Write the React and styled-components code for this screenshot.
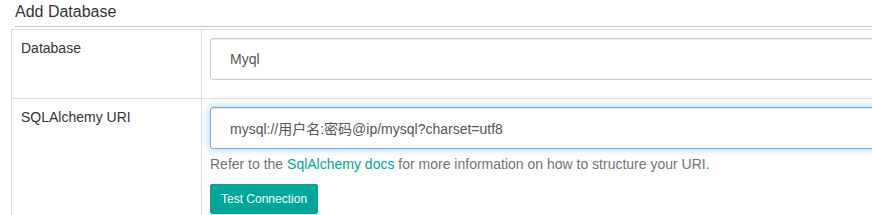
import React from "react";
import styled, { createGlobalStyle } from "styled-components";

const Global = createGlobalStyle`
  html, body { margin: 0; padding: 0; background: #fff; overflow: hidden; }
  body {
    font-family: "Liberation Sans", Arial, "Noto Sans CJK SC", sans-serif;
    font-size: 14px;
    line-height: 20px;
    color: #333;
  }
`;

const Page = styled.div`
  padding-left: 11px;
  width: 1000px;
`;

const Header = styled.div`
  margin-left: 4px;
  padding: 2px 0 4px 0;
  font-size: 16px;
  line-height: 20px;
  color: #333;
  border-bottom: 1px solid #c4c4c4;
`;

const Table = styled.table`
  margin-top: 2px;
  width: 100%;
  border-collapse: collapse;
  border: 1px solid #ddd;
`;

const Row = styled.tr`
  border-top: 1px solid #ddd;
`;

const LabelCell = styled.td`
  width: 172px;
  padding: 8px 8px 8px 9px;
  vertical-align: top;
  border-right: 1px solid #ddd;
  color: #333;
  line-height: 20px;
`;

const FieldCell = styled.td`
  padding: 8px;
  vertical-align: top;
`;

const Input = styled.input`
  display: block;
  box-sizing: border-box;
  width: 100%;
  height: 42px;
  margin: 0 0 ${(p) => (p.$last ? 0 : 10)}px 0;
  padding: 0 19px;
  font-family: "Liberation Sans", Arial, "Noto Sans CJK SC", sans-serif;
  font-size: 14px;
  color: #555;
  background: #fff;
  border: 1px solid ${(p) => (p.$focused ? "#66afe9" : "#ccc")};
  border-radius: 3px;
  outline: none;
  box-shadow: ${(p) =>
    p.$focused
      ? "inset 0 1px 1px rgba(0,0,0,.075), 0 0 8px rgba(102,175,233,.6)"
      : "inset 0 1px 1px rgba(0,0,0,.075)"};
`;

const Help = styled.p`
  margin: 5px 0 10px 0;
  color: #737373;
  font-size: 14px;
  line-height: 20px;
`;

const Link = styled.a`
  color: #00a699;
  text-decoration: none;
`;

const Button = styled.button`
  display: inline-block;
  height: 30px;
  padding: 0 10px;
  font-family: "Liberation Sans", Arial, sans-serif;
  font-size: 12px;
  line-height: 28px;
  color: #fff;
  background: #00a699;
  border: 1px solid #00a699;
  border-radius: 2px;
  cursor: pointer;
`;

export default function App() {
  return (
    <>
      <Global />
      <Page>
        <Header>Add Database</Header>
        <Table>
          <tbody>
            <Row>
              <LabelCell>Database</LabelCell>
              <FieldCell>
                <Input defaultValue="Myql" readOnly />
              </FieldCell>
            </Row>
            <Row>
              <LabelCell>SQLAlchemy URI</LabelCell>
              <FieldCell>
                <Input
                  $focused
                  $last
                  defaultValue="mysql://用户名:密码@ip/mysql?charset=utf8"
                  readOnly
                />
                <Help>
                  Refer to the <Link href="#">SqlAlchemy docs</Link> for more
                  information on how to structure your URI.
                </Help>
                <Button>Test Connection</Button>
              </FieldCell>
            </Row>
          </tbody>
        </Table>
      </Page>
    </>
  );
}
